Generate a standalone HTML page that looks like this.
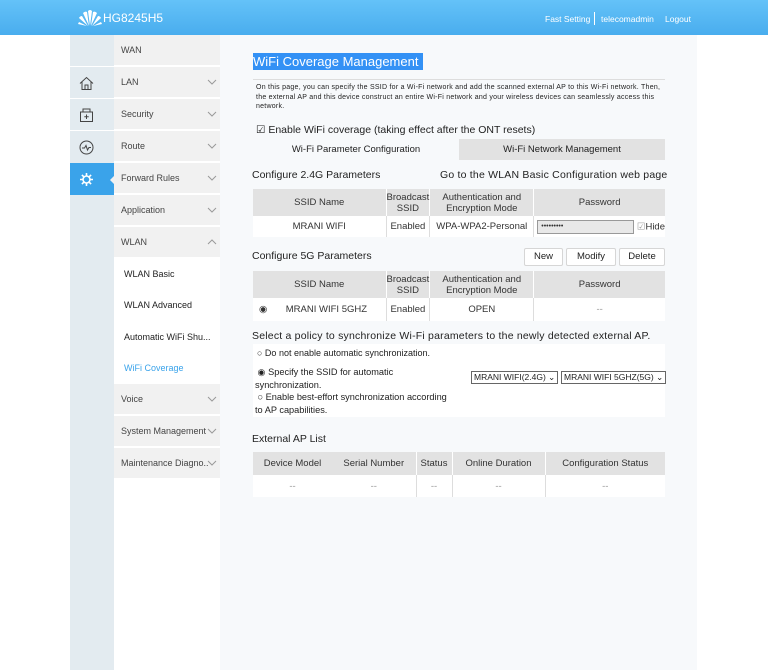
<!DOCTYPE html>
<html><head><meta charset="utf-8"><style>
*{margin:0;padding:0;box-sizing:border-box}
body{width:768px;height:670px;background:#fff;font-family:"Liberation Sans",sans-serif;position:relative;overflow:hidden;color:#222}
.hdr{position:absolute;left:0;top:0;width:768px;height:35px;background:linear-gradient(#64c2f8,#49adee)}
.abs{position:absolute}
.ic{position:absolute;left:70px;top:35px;width:44px;height:635px;background:#e3ebf0}
.mn{position:absolute;left:114px;top:35px;width:106px;height:635px;background:#fff}
.mi{position:absolute;left:114px;width:106px;height:31px;background:#f1f1f1;border-bottom:1px solid #fff;font-size:9px;color:#444;padding-left:7px;line-height:31px}
.mi svg{position:absolute;right:3px;top:12px}
.sub{position:absolute;left:124px;font-size:9px;color:#222}
.ct{position:absolute;left:220px;top:35px;width:477px;height:635px;background:#f7f9fb}
table{border-collapse:collapse;position:absolute;font-size:9.5px;color:#333}
th{background:#e2e2e2;font-weight:normal;text-align:center;border-left:1px solid #fff}
td{background:#fff;text-align:center;border-left:1px solid #ddd}
td:first-child,th:first-child{border-left:none}
.btn{position:absolute;top:248px;height:18px;background:#fff;border:1px solid #d6d6d6;border-radius:2px;font-size:9.5px;text-align:center;line-height:16px}
.sel{position:absolute;top:371px;height:13px;border:1px solid #666;background:#fff;font-size:8.5px;line-height:11px;padding-left:2px}
</style></head><body>
<div class="hdr">
<svg class="abs" style="left:78px;top:9px" width="24" height="18" viewBox="0 0 24 18"><g fill="#fff"><path d="M12 17 L10 2 Q12 0 14 2Z"/><path d="M11 17 L5 4 Q7 2 9 3Z"/><path d="M13 17 L19 4 Q17 2 15 3Z"/><path d="M10 17 L1 9 Q2 7 4 7Z"/><path d="M14 17 L23 9 Q22 7 20 7Z"/><path d="M9 17 L0 15 L1 13Z"/><path d="M15 17 L24 15 L23 13Z"/></g></svg>
<div class="abs" style="left:103px;top:11px;color:#fff;font-size:12px">HG8245H5</div>
<div class="abs" style="left:545px;top:14px;color:#fff;font-size:8.5px">Fast Setting</div>
<div class="abs" style="left:594px;top:12px;width:1px;height:13px;background:#fff"></div>
<div class="abs" style="left:601px;top:14px;color:#fff;font-size:8.5px">telecomadmin</div>
<div class="abs" style="left:665px;top:14px;color:#fff;font-size:8.5px">Logout</div>
</div>
<div class="ic"></div>
<div class="abs" style="left:70px;top:66px;width:44px;height:1px;background:#fff"></div>
<div class="abs" style="left:70px;top:98px;width:44px;height:1px;background:#fff"></div>
<div class="abs" style="left:70px;top:130px;width:44px;height:1px;background:#fff"></div>
<div class="abs" style="left:70px;top:163px;width:44px;height:32px;background:#3aa3ea"></div>
<svg class="abs" style="left:79px;top:76px" width="15" height="15" viewBox="0 0 15 15" fill="none" stroke="#444" stroke-width="1"><path d="M1 7.5 L7.5 1.5 L14 7.5 M3 6 V13.5 H12 V6 M6 13.5 V9 H9 V13.5"/></svg>
<svg class="abs" style="left:79px;top:107px" width="15" height="16" viewBox="0 0 15 16" fill="none" stroke="#444" stroke-width="1"><path d="M4 5 V2 H11 V5 M1.5 5 H13.5 V14.5 H1.5Z M7.5 7.5 V12 M5.3 9.8 H9.7"/></svg>
<svg class="abs" style="left:79px;top:140px" width="15" height="15" viewBox="0 0 15 15" fill="none" stroke="#444" stroke-width="1"><circle cx="7.5" cy="7.5" r="6.5"/><path d="M3 8 L5.5 8 L7 5.5 L8.5 10 L10 7.5 L12 7.5"/></svg>
<svg class="abs" style="left:79px;top:172px" width="15" height="15" viewBox="0 0 15 15" fill="none" stroke="#fff" stroke-width="1.6"><circle cx="7.5" cy="7.5" r="3.5"/><path d="M7.5 1v2.5M7.5 11.5V14M1 7.5h2.5M11.5 7.5H14M2.9 2.9l1.8 1.8M10.3 10.3l1.8 1.8M2.9 12.1l1.8-1.8M10.3 4.7l1.8-1.8"/></svg>
<div class="abs" style="left:110px;top:175px;width:0;height:0;border-top:5px solid transparent;border-bottom:5px solid transparent;border-right:5px solid #f1f1f1"></div>
<div class="mn"></div>
<div class="mi" style="top:35px">WAN</div>
<div class="mi" style="top:67px">LAN<svg width="10" height="6" viewBox="0 0 10 6"><path d="M1 1l4 4 4-4" fill="none" stroke="#999"/></svg></div>
<div class="mi" style="top:99px">Security<svg width="10" height="6" viewBox="0 0 10 6"><path d="M1 1l4 4 4-4" fill="none" stroke="#999"/></svg></div>
<div class="mi" style="top:131px">Route<svg width="10" height="6" viewBox="0 0 10 6"><path d="M1 1l4 4 4-4" fill="none" stroke="#999"/></svg></div>
<div class="mi" style="top:163px">Forward Rules<svg width="10" height="6" viewBox="0 0 10 6"><path d="M1 1l4 4 4-4" fill="none" stroke="#999"/></svg></div>
<div class="mi" style="top:195px">Application<svg width="10" height="6" viewBox="0 0 10 6"><path d="M1 1l4 4 4-4" fill="none" stroke="#999"/></svg></div>
<div class="mi" style="top:227px">WLAN<svg width="10" height="6" viewBox="0 0 10 6"><path d="M1 5l4-4 4 4" fill="none" stroke="#999"/></svg></div>
<div class="sub" style="top:269px">WLAN Basic</div>
<div class="sub" style="top:300px">WLAN Advanced</div>
<div class="sub" style="top:332px">Automatic WiFi Shu...</div>
<div class="sub" style="top:363px;color:#3aa3ea">WiFi Coverage</div>
<div class="mi" style="top:384px">Voice<svg width="10" height="6" viewBox="0 0 10 6"><path d="M1 1l4 4 4-4" fill="none" stroke="#999"/></svg></div>
<div class="mi" style="top:416px">System Management<svg width="10" height="6" viewBox="0 0 10 6"><path d="M1 1l4 4 4-4" fill="none" stroke="#999"/></svg></div>
<div class="mi" style="top:448px">Maintenance Diagno..<svg width="10" height="6" viewBox="0 0 10 6"><path d="M1 1l4 4 4-4" fill="none" stroke="#999"/></svg></div>
<div class="ct"></div>
<div class="abs" style="left:253px;top:53px;width:170px;height:17px;background:#3391f5;color:#fff;font-size:13px;line-height:17px">WiFi Coverage Management</div>
<div class="abs" style="left:253px;top:79px;width:412px;height:1px;background:#ddd"></div>
<div class="abs" style="left:256px;top:83px;width:405px;font-size:7px;letter-spacing:0.25px;line-height:9.5px;color:#222">On this page, you can specify the SSID for a Wi-Fi network and add the scanned external AP to this Wi-Fi network. Then, the external AP and this device construct an entire Wi-Fi network and your wireless devices can seamlessly access this network.</div>
<div class="abs" style="left:256px;top:124px;font-size:10.5px">&#9745; Enable WiFi coverage (taking effect after the ONT resets)</div>
<div class="abs" style="left:253px;top:139px;width:206px;height:21px;background:#f7f9fb;font-size:9.5px;text-align:center;line-height:21px">Wi-Fi Parameter Configuration</div>
<div class="abs" style="left:459px;top:139px;width:206px;height:21px;background:#e2e2e2;font-size:9.5px;text-align:center;line-height:21px">Wi-Fi Network Management</div>
<div class="abs" style="left:252px;top:169px;font-size:10.5px">Configure 2.4G Parameters</div>
<div class="abs" style="left:440px;top:169px;font-size:10.5px;letter-spacing:0.2px">Go to the WLAN Basic Configuration web page</div>
<table style="left:253px;top:189px;width:412px">
<tr style="height:27px"><th style="width:133px">SSID Name</th><th style="width:40px">Broadcast<br>SSID</th><th style="width:104px">Authentication and<br>Encryption Mode</th><th>Password</th></tr>
<tr style="height:21px"><td>MRANI WIFI</td><td>Enabled</td><td>WPA-WPA2-Personal</td><td style="text-align:left;padding-left:3px"><span style="display:inline-block;width:97px;height:14px;border:1px solid #999;background:#e8e8e8;font-size:7px;line-height:12px;padding-left:3px;vertical-align:middle">•••••••••</span> <span style="color:#999">&#9745;</span>Hide</td></tr>
</table>
<div class="abs" style="left:252px;top:250px;font-size:10.5px">Configure 5G Parameters</div>
<div class="btn" style="left:524px;width:39px">New</div>
<div class="btn" style="left:566px;width:50px">Modify</div>
<div class="btn" style="left:619px;width:46px">Delete</div>
<table style="left:253px;top:271px;width:412px">
<tr style="height:27px"><th style="width:133px">SSID Name</th><th style="width:40px">Broadcast<br>SSID</th><th style="width:104px">Authentication and<br>Encryption Mode</th><th>Password</th></tr>
<tr style="height:23px"><td><span style="float:left;margin-left:6px">&#9673;</span>MRANI WIFI 5GHZ</td><td>Enabled</td><td>OPEN</td><td style="color:#999">--</td></tr>
</table>
<div class="abs" style="left:252px;top:330px;font-size:10.5px;letter-spacing:0.2px">Select a policy to synchronize Wi-Fi parameters to the newly detected external AP.</div>
<div class="abs" style="left:253px;top:344px;width:412px;height:73px;background:#fff"></div>
<div class="abs" style="left:257px;top:348px;font-size:9px">&#9675; Do not enable automatic synchronization.</div>
<div class="abs" style="left:255px;top:366px;width:210px;font-size:9.2px;line-height:12.5px">&nbsp;&#9673; Specify the SSID for automatic<br>synchronization.<br>&nbsp;&#9675; Enable best-effort synchronization according<br>to AP capabilities.</div>
<div class="sel" style="left:471px;width:87px">MRANI WIFI(2.4G) &#8964;</div>
<div class="sel" style="left:561px;width:105px">MRANI WIFI 5GHZ(5G) &#8964;</div>
<div class="abs" style="left:252px;top:433px;font-size:10.5px">External AP List</div>
<table style="left:253px;top:452px;width:412px">
<tr style="height:23px"><th style="width:79px;border:none">Device Model</th><th style="width:84px;border:none">Serial Number</th><th style="width:36px">Status</th><th style="width:93px">Online Duration</th><th>Configuration Status</th></tr>
<tr style="height:22px;color:#999"><td>--</td><td style="border:none">--</td><td>--</td><td>--</td><td>--</td></tr>
</table>
</body></html>
